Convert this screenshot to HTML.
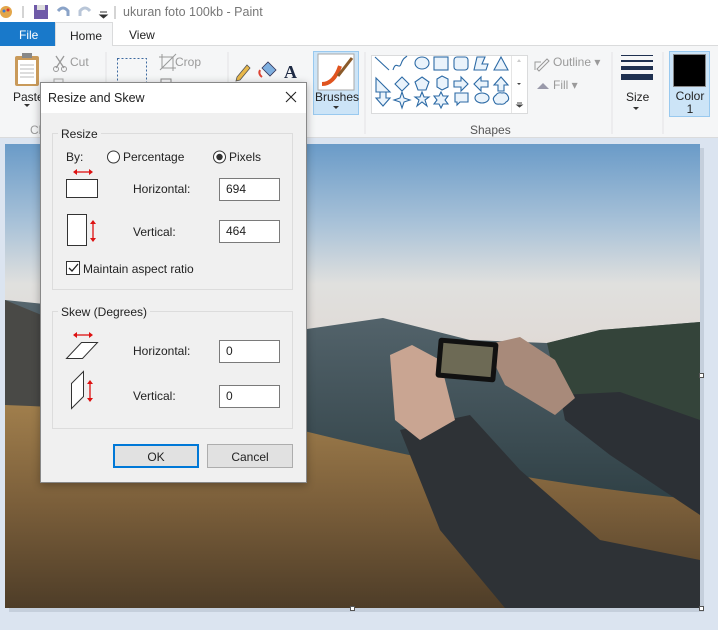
<!DOCTYPE html>
<html><head><meta charset="utf-8"><style>
*{margin:0;padding:0;box-sizing:border-box}
body{width:718px;height:630px;overflow:hidden;background:#dbe4f0;font-family:"Liberation Sans",sans-serif;font-size:12px;color:#222;position:relative}
.a{position:absolute;white-space:nowrap}
.g{color:#9a9a9a}
.inp{position:absolute;background:#fff;border:1px solid #7a7a7a;width:61px;height:23px;padding:3px 0 0 6px;font-size:12px}
.btn{position:absolute;background:#e1e1e1;border:1px solid #adadad;height:24px;text-align:center;padding-top:5px}
</style></head><body>
<div class="a" style="left:0;top:0;width:718px;height:22px;background:#fff"></div>
<svg class="a" style="left:0;top:2px" width="120" height="20"><circle cx="6" cy="10" r="6" fill="#e3a64a"/><circle cx="4" cy="9" r="1.5" fill="#3a7bd5"/><circle cx="8" cy="8" r="1.5" fill="#d33"/><line x1="23" y1="4" x2="23" y2="16" stroke="#aaa"/><rect x="34" y="3" width="14" height="14" fill="#6f5aa8"/><rect x="37" y="3" width="8" height="5" fill="#ddd"/><path d="M58 9 q5-6 10 0 v5" stroke="#8aa3c8" stroke-width="3" fill="none"/><path d="M90 9 q-5-6-10 0 v5" stroke="#b9c6d8" stroke-width="3" fill="none"/><path d="M100 10h7M100 13l3.5 3 3.5-3z" stroke="#333" fill="#333"/><line x1="115" y1="4" x2="115" y2="17" stroke="#aaa"/></svg>
<div class="a" style="left:123px;top:5px;font-size:12.5px;color:#777">ukuran foto 100kb - Paint</div>
<div class="a" style="left:0;top:22px;width:718px;height:24px;background:#fff;border-bottom:1px solid #dadbdc"></div>
<div class="a" style="left:0;top:22px;width:55px;height:24px;background:#1979ca;color:#fff;padding:6px 0 0 19px">File</div>
<div class="a" style="left:55px;top:22px;width:58px;height:25px;background:#f5f6f7;border:1px solid #dadbdc;border-bottom:none;padding:6px 0 0 14px">Home</div>
<div class="a" style="left:129px;top:28px">View</div>
<div class="a" style="left:0;top:46px;width:718px;height:92px;background:#f5f6f7;border-bottom:1px solid #dadbdc"></div>
<svg class="a" style="left:0;top:46px" width="718" height="92">
<rect x="15" y="10" width="24" height="30" rx="2" fill="#c99a5a"/><rect x="18" y="14" width="18" height="24" fill="#fff"/><g stroke="#bbb"><line x1="20" y1="19" x2="34" y2="19"/><line x1="20" y1="23" x2="34" y2="23"/><line x1="20" y1="27" x2="34" y2="27"/><line x1="20" y1="31" x2="34" y2="31"/></g><rect x="22" y="7" width="10" height="5" fill="#888"/>
<path d="M24 58l3 3 3-3z" fill="#333"/>
<path d="M56 10l8 12M64 10l-8 12" stroke="#999" stroke-width="1.3"/><circle cx="56" cy="23" r="2.5" fill="none" stroke="#999"/><circle cx="64" cy="23" r="2.5" fill="none" stroke="#999"/>
<rect x="54" y="33" width="9" height="8" fill="none" stroke="#aaa"/>
<line x1="106" y1="6" x2="106" y2="80" stroke="#e2e3e4"/>
<rect x="117.5" y="12.5" width="29" height="28" fill="none" stroke="#3d6aa0" stroke-dasharray="2,2"/>
<path d="M162 8v14h14M159 11h14v14M160 24l16-16" stroke="#999" fill="none"/>
<rect x="161" y="33" width="10" height="8" fill="none" stroke="#888"/>
<line x1="228" y1="6" x2="228" y2="80" stroke="#e2e3e4"/>
<path d="M237 31l10-12 3 3-10 12-4 1z" fill="#e8b84a" stroke="#555" stroke-width=".8"/>
<path d="M262 22l6-6 8 8-6 6z" fill="#7fb0e0" stroke="#335" stroke-width=".8"/><path d="M260 24q-2 4 2 7" stroke="#d43" stroke-width="2" fill="none"/>
<text x="284" y="32" font-family="Liberation Serif" font-weight="bold" font-size="18" fill="#1e2a44">A</text>
<rect x="313.5" y="5.5" width="45" height="63" fill="#cce4f7" stroke="#99c9ef"/><rect x="318" y="8" width="36" height="36" fill="#fff" stroke="#aaa"/><path d="M322 38q12 0 18-18" stroke="#e0541f" stroke-width="4" fill="none"/><path d="M338 30l14-18" stroke="#8a5a2a" stroke-width="3"/>
<path d="M333 60l3 3 3-3z" fill="#333"/>
<line x1="365" y1="6" x2="365" y2="88" stroke="#e2e3e4"/>
<rect x="371.5" y="9.5" width="156" height="58" fill="#fff" stroke="#dadbdc"/><line x1="511.5" y1="10" x2="511.5" y2="67" stroke="#e5e5e5"/>
<g stroke="#2c6aa5" stroke-width="1.1" fill="#eaf3fb">
<line x1="375" y1="11" x2="389" y2="24"/><path d="M393 24c3-10 6 0 8-6s4-6 6-8" fill="none"/>
<ellipse cx="422" cy="17" rx="7" ry="6"/><rect x="434" y="11" width="14" height="13"/><rect x="454" y="11" width="14" height="13" rx="3"/><path d="M474 24l3-13h8l-3 7h6l-2 6z"/><path d="M494 24l7-13 7 13z"/>
<path d="M376 32v14h14z"/><path d="M402 31l7 7-7 7-7-7z"/><path d="M422 31l7 5-3 8h-8l-3-8z"/><path d="M437 33l5-3 6 3v8l-6 3-5-3z"/><path d="M454 35h7v-4l7 7-7 7v-4h-7z"/><path d="M488 35h-7v-4l-7 7 7 7v-4h7z"/><path d="M494 39h4v6h6v-6h4l-7-8z"/>
<path d="M376 52h4v-6h6v6h4l-7 8z"/><path d="M402 46l2 6 6 2-6 2-2 6-2-6-6-2 6-2z"/><path d="M422 46l2 5h5l-4 3 2 6-5-4-5 4 2-6-4-3h5z"/><path d="M441 46l2 4h5l-3 4 3 4h-5l-2 4-2-4h-5l3-4-3-4h5z"/><path d="M455 47h13v9h-8l-3 3v-3h-2z"/><ellipse cx="482" cy="52" rx="7" ry="5"/><path d="M496 49q2-3 6-2 4-1 6 3t-2 6q-2 3-6 2-5 1-6-3-2-3 2-6z"/>
</g>
<path d="M517 16l2-3 2 3z" fill="#ccc"/><path d="M517 37l2 2 2-2z" fill="#444"/><path d="M517 57h5M517 59l2.5 2 2.5-2z" stroke="#444" fill="#444"/>
<path d="M535 24v-8h6M537 23l10-10 2 2-10 10z" stroke="#999" fill="none"/>
<path d="M537 43l6-6 6 6z" fill="#99a"/>
<line x1="612" y1="6" x2="612" y2="88" stroke="#e2e3e4"/>
<rect x="621" y="9" width="32" height="1" fill="#1e3050"/><rect x="621" y="14" width="32" height="2" fill="#1e3050"/><rect x="621" y="20" width="32" height="4" fill="#1e3050"/><rect x="621" y="28" width="32" height="6" fill="#1e3050"/>
<path d="M633 61l3 3 3-3z" fill="#333"/>
<line x1="663" y1="6" x2="663" y2="88" stroke="#e2e3e4"/>
<rect x="669.5" y="5.5" width="40" height="65" fill="#cce4f7" stroke="#99c9ef"/><rect x="673.5" y="8.5" width="32" height="32" fill="#000" stroke="#888"/>
</svg>
<div class="a g" style="left:70px;top:55px">Cut</div>
<div class="a g" style="left:175px;top:55px">Crop</div>
<div class="a" style="left:13px;top:90px">Paste</div>
<div class="a g" style="left:30px;top:123px">Cli</div>
<div class="a" style="left:315px;top:90px">Brushes</div>
<div class="a g" style="left:553px;top:55px">Outline ▾</div>
<div class="a g" style="left:553px;top:78px">Fill ▾</div>
<div class="a" style="left:470px;top:123px;color:#555">Shapes</div>
<div class="a" style="left:626px;top:90px">Size</div>
<div class="a" style="left:675px;top:90px;text-align:center;width:30px;line-height:13px">Color<br>1</div>
<div class="a" style="left:9px;top:148px;width:695px;height:464px;background:#c5cfdc"></div>
<svg class="a" style="left:5px;top:144px" width="695" height="464" viewBox="5 144 695 464">
<defs>
<linearGradient id="sky" x1="0" y1="0" x2="0" y2="1"><stop offset="0" stop-color="#6a9bc8"/><stop offset=".4" stop-color="#a9c2d8"/><stop offset=".7" stop-color="#e0e0de"/><stop offset="1" stop-color="#e0dad6"/></linearGradient>
<linearGradient id="gr" x1="0" y1="0" x2="0" y2="1"><stop offset="0" stop-color="#a07e4c"/><stop offset=".5" stop-color="#7a5e3a"/><stop offset="1" stop-color="#4e3d28"/></linearGradient>
<linearGradient id="val" x1="0" y1="0" x2="0" y2="1"><stop offset="0" stop-color="#56666e"/><stop offset="1" stop-color="#2c3d42"/></linearGradient>
</defs>
<rect x="5" y="144" width="695" height="200" fill="url(#sky)"/>
<path d="M5 300 L300 330 L383 318 L470 340 L547 343 L600 330 L700 322 L700 520 L5 420 Z" fill="url(#val)"/>
<path d="M547 343 L600 330 L700 322 L700 440 L560 400 Z" fill="#34443a"/>
<path d="M5 300 L5 410 L300 430 L200 380 Z" fill="#494946"/>
<path d="M5 405 Q150 410 300 430 Q500 480 700 500 L700 608 L5 608 Z" fill="url(#gr)"/>
<path d="M400 430 L470 415 L520 470 L600 540 L700 560 L700 608 L505 608 L440 530 Z" fill="#2e3236"/>
<path d="M560 395 L620 392 L700 420 L700 515 L610 455 L565 420 Z" fill="#2c3035"/>
<path d="M390 355 L412 345 L440 360 L455 420 L420 440 L395 420 Z" fill="#c9a592"/>
<path d="M485 345 L520 337 L555 360 L575 398 L555 415 L505 385 Z" fill="#a88a7a"/>
<rect x="437" y="340" width="60" height="40" rx="3" fill="#111" transform="rotate(5 467 360)"/>
<rect x="442" y="345" width="50" height="30" fill="#6d6a55" transform="rotate(5 467 360)"/>
</svg>
<svg class="a" style="left:0;top:0" width="718" height="630"><g fill="#fff" stroke="#555"><rect x="699.5" y="373.5" width="4" height="4"/><rect x="699.5" y="606.5" width="4" height="4"/><rect x="350.5" y="606.5" width="4" height="4"/></g></svg>
<div class="a" style="left:40px;top:82px;width:267px;height:401px;background:#f0f0f0;border:1px solid #888;box-shadow:0 2px 8px rgba(0,0,0,.3)"></div>
<div class="a" style="left:41px;top:83px;width:265px;height:30px;background:#fff"></div>
<div class="a" style="left:48px;top:91px;font-size:12.5px">Resize and Skew</div>
<svg class="a" style="left:285px;top:91px" width="12" height="12"><path d="M1 1l10 10M11 1l-10 10" stroke="#222" stroke-width="1.1"/></svg>
<div class="a" style="left:52px;top:133px;width:241px;height:157px;border:1px solid #dcdcdc"></div>
<div class="a" style="left:58px;top:127px;background:#f0f0f0;padding:0 3px">Resize</div>
<div class="a" style="left:66px;top:150px">By:</div>
<svg class="a" style="left:0;top:0" width="320" height="480">
<circle cx="113.5" cy="157" r="6" fill="#fff" stroke="#333"/><circle cx="219.5" cy="157" r="6" fill="#fff" stroke="#333"/><circle cx="219.5" cy="157" r="3.2" fill="#333"/>
<path d="M76 172h14" stroke="#d11" stroke-width="1.3"/><path d="M73 172l4-3v6zM93 172l-4-3v6z" fill="#d11"/>
<rect x="66.5" y="179.5" width="31" height="18" fill="#fff" stroke="#333"/>
<rect x="67.5" y="214.5" width="19" height="31" fill="#fff" stroke="#333"/>
<path d="M93 223v16" stroke="#d11" stroke-width="1.3"/><path d="M93 220l-3 4h6zM93 242l-3-4h6z" fill="#d11"/>
<rect x="66.5" y="261.5" width="13" height="13" fill="#fff" stroke="#333"/><path d="M69 268l3 3 6-7" stroke="#222" fill="none" stroke-width="1.3"/>
<path d="M76 335h14" stroke="#d11" stroke-width="1.3"/><path d="M73 335l4-3v6zM93 335l-4-3v6z" fill="#d11"/>
<path d="M66.5 358.5l15-16h16l-15 16z" fill="#fff" stroke="#333"/>
<path d="M71.5 408.5v-25l12-12v25z" fill="#fff" stroke="#333"/>
<path d="M90 383v16" stroke="#d11" stroke-width="1.3"/><path d="M90 380l-3 4h6zM90 402l-3-4h6z" fill="#d11"/>
</svg>
<div class="a" style="left:123px;top:150px">Percentage</div>
<div class="a" style="left:229px;top:150px">Pixels</div>
<div class="a" style="left:133px;top:182px">Horizontal:</div>
<div class="inp" style="left:219px;top:178px">694</div>
<div class="a" style="left:133px;top:225px">Vertical:</div>
<div class="inp" style="left:219px;top:220px">464</div>
<div class="a" style="left:83px;top:262px">Maintain aspect ratio</div>
<div class="a" style="left:52px;top:311px;width:241px;height:118px;border:1px solid #dcdcdc"></div>
<div class="a" style="left:58px;top:305px;background:#f0f0f0;padding:0 3px">Skew (Degrees)</div>
<div class="a" style="left:133px;top:344px">Horizontal:</div>
<div class="inp" style="left:219px;top:340px">0</div>
<div class="a" style="left:133px;top:389px">Vertical:</div>
<div class="inp" style="left:219px;top:385px">0</div>
<div class="btn" style="left:113px;top:444px;width:86px;border:2px solid #0078d7;padding-top:4px">OK</div>
<div class="btn" style="left:207px;top:444px;width:86px">Cancel</div>
</body></html>
